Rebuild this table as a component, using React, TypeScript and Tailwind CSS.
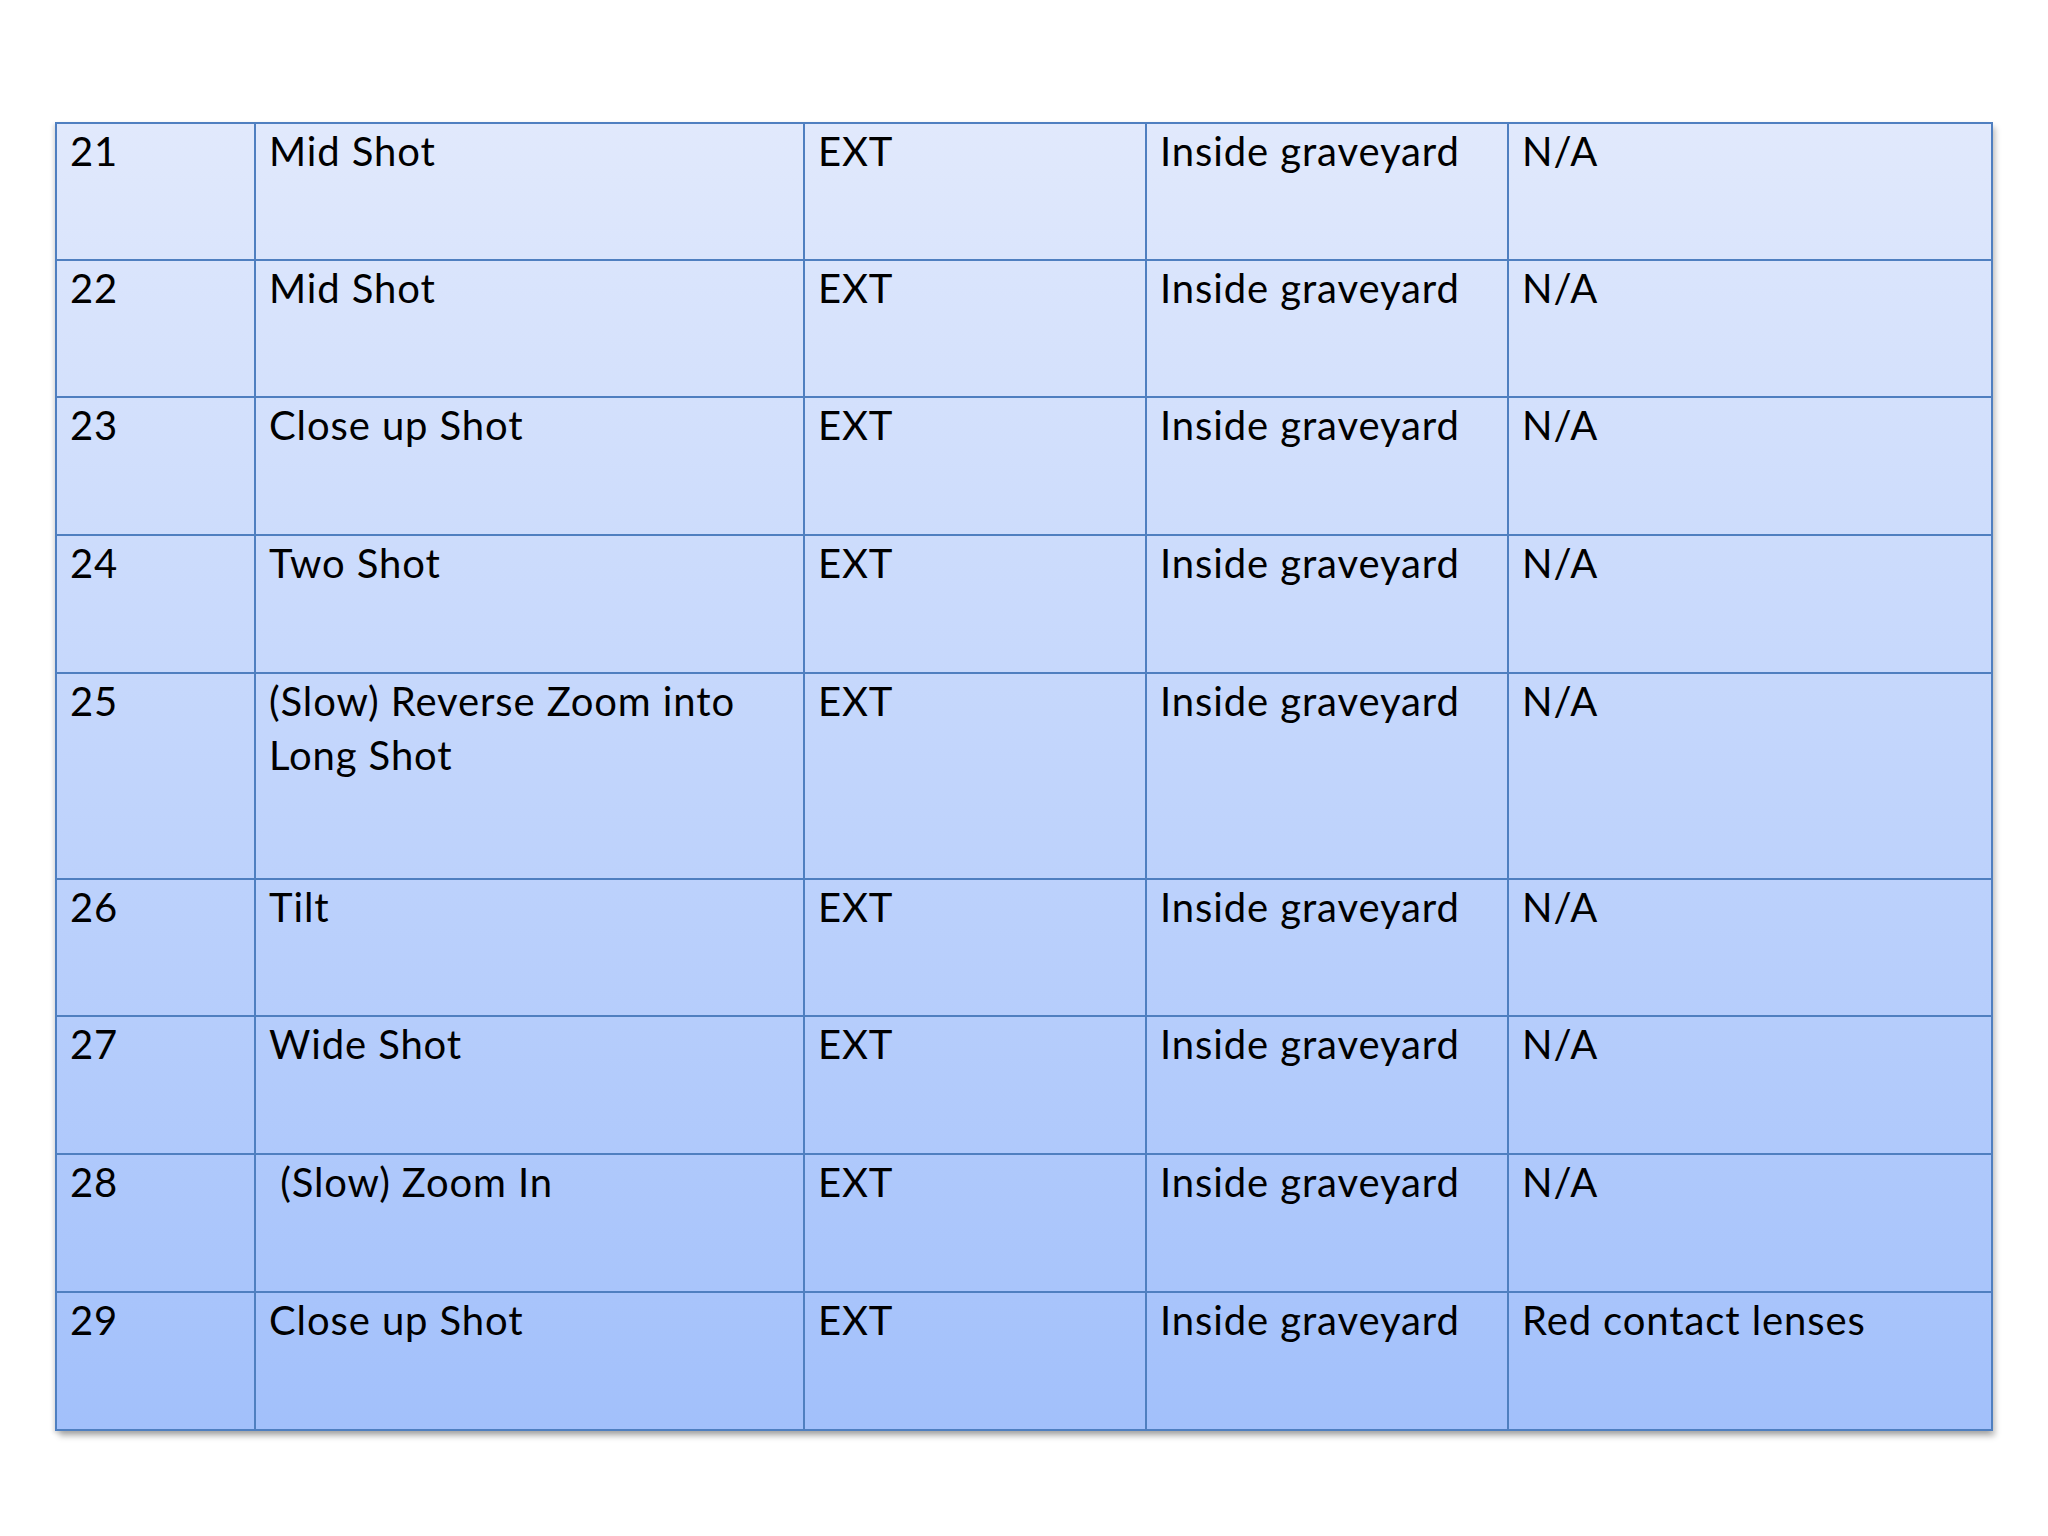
import React from "react";

const rows: [string, string, string, string, string, number][] = [
  ["21", "Mid Shot", "EXT", "Inside graveyard", "N/A", 137],
  ["22", "Mid Shot", "EXT", "Inside graveyard", "N/A", 137],
  ["23", "Close up Shot", "EXT", "Inside graveyard", "N/A", 138],
  ["24", "Two Shot", "EXT", "Inside graveyard", "N/A", 138],
  ["25", "(Slow) Reverse Zoom into Long Shot", "EXT", "Inside graveyard", "N/A", 206],
  ["26", "Tilt", "EXT", "Inside graveyard", "N/A", 137],
  ["27", "Wide Shot", "EXT", "Inside graveyard", "N/A", 138],
  ["28", "\u00a0(Slow) Zoom In", "EXT", "Inside graveyard", "N/A", 138],
  ["29", "Close up Shot", "EXT", "Inside graveyard", "Red contact lenses", 138],
];

export default function App() {
  return (
    <div className="w-[2048px] h-[1536px] bg-white overflow-hidden" style={{ fontFamily: "Lato, 'Open Sans', sans-serif" }}>
      <div className="ml-[55px] mt-[122px] w-[1936px] shadow-[4px_5px_6px_rgba(0,0,0,0.28),-2px_2px_4px_rgba(0,0,0,0.12)]">
        <table className="w-full table-fixed border-collapse border-2 border-[#4f7fc0] bg-gradient-to-b from-[#e1e9fc] to-[#a2c0fb] text-[40px] leading-[54px] tracking-[0.9px] text-black">
          <colgroup>
            <col className="w-[199px]" />
            <col className="w-[549px]" />
            <col className="w-[342px]" />
            <col className="w-[362px]" />
            <col className="w-[484px]" />
          </colgroup>
          <tbody>
            {rows.map((r) => (
              <tr key={r[0]} style={{ height: r[5] }}>
                {r.slice(0, 5).map((c, i) => (
                  <td
                    key={i}
                    className="border-2 border-[#4f7fc0] align-top pt-0 pl-[13px] pr-[10px] whitespace-pre-wrap"
                  >
                    {c as string}
                  </td>
                ))}
              </tr>
            ))}
          </tbody>
        </table>
      </div>
    </div>
  );
}
